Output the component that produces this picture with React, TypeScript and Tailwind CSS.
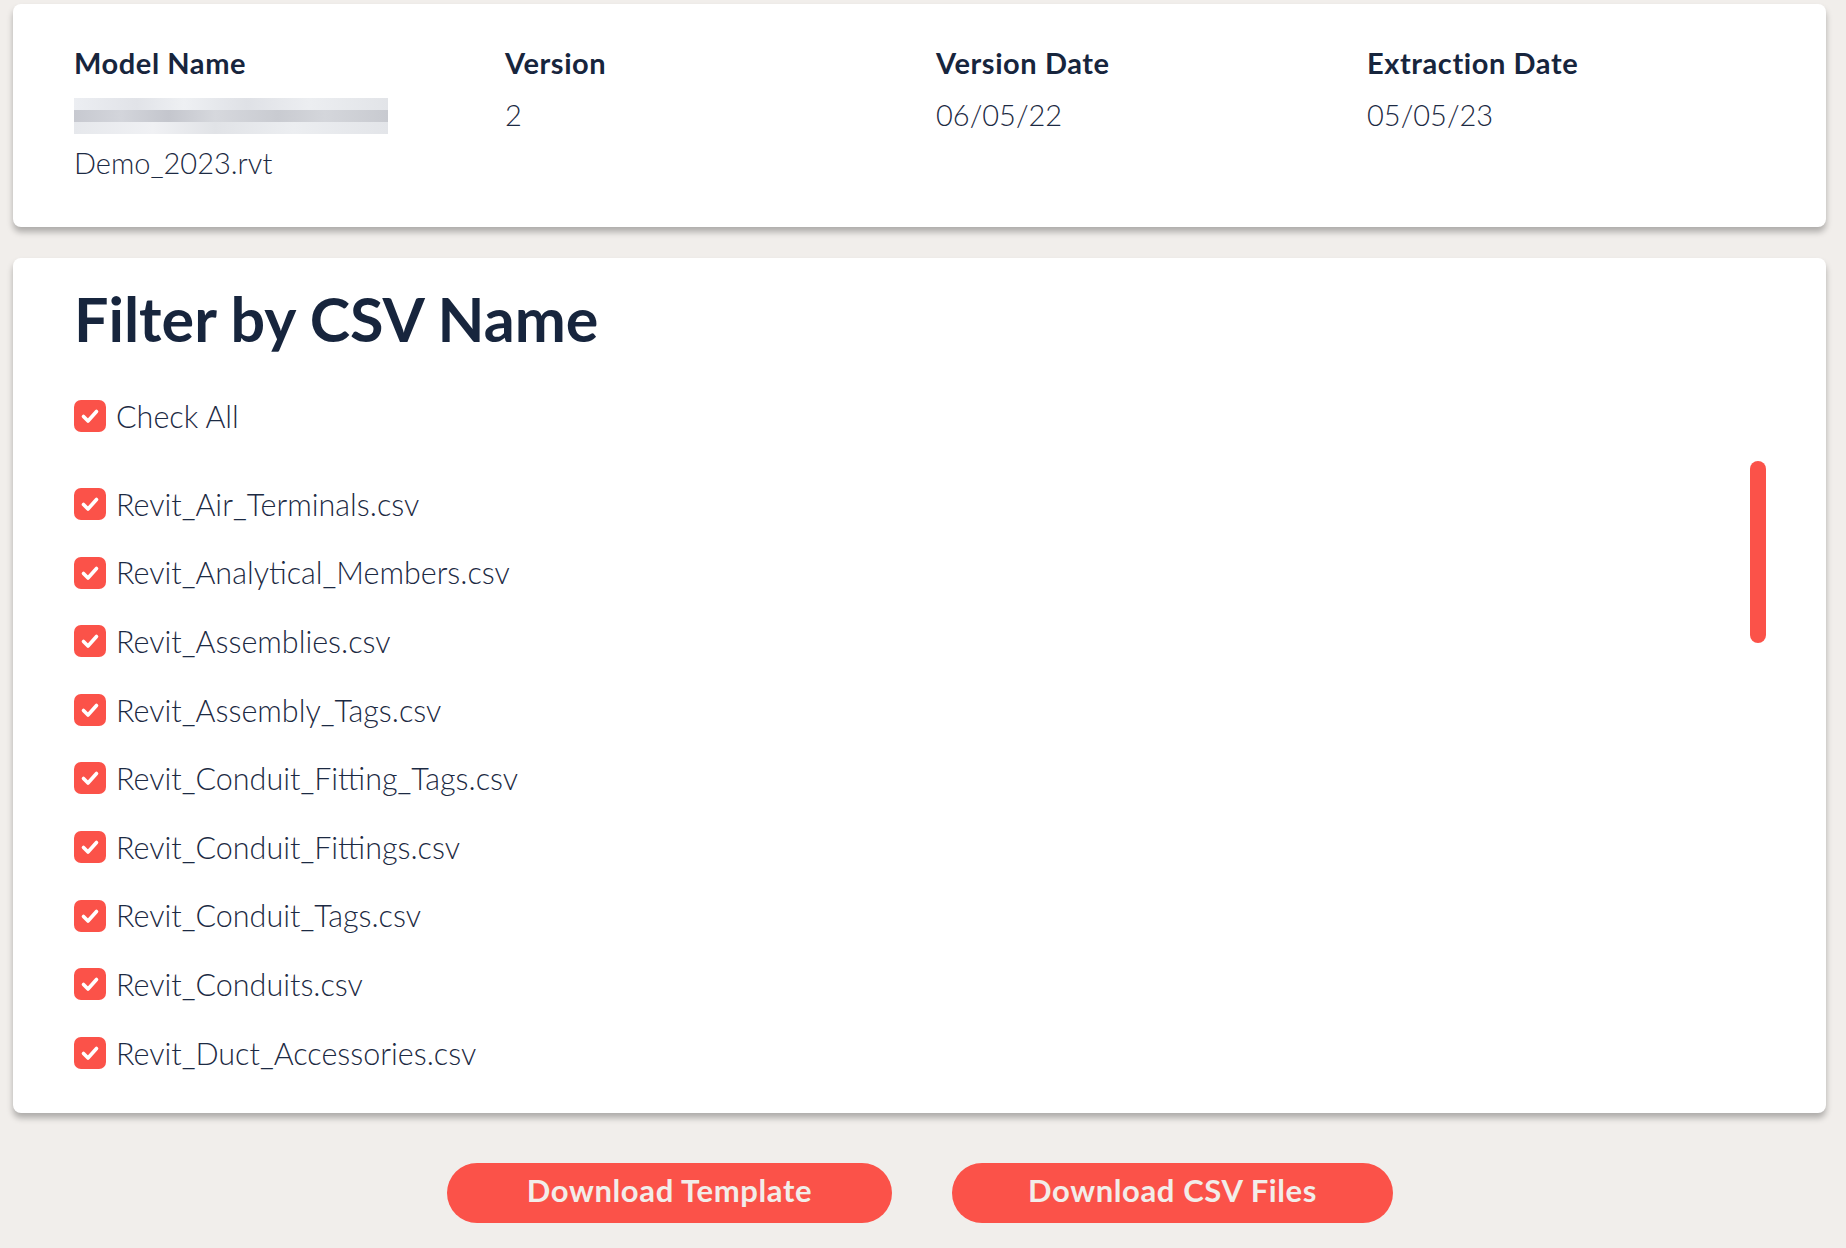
const files = [
  "Revit_Air_Terminals.csv",
  "Revit_Analytical_Members.csv",
  "Revit_Assemblies.csv",
  "Revit_Assembly_Tags.csv",
  "Revit_Conduit_Fitting_Tags.csv",
  "Revit_Conduit_Fittings.csv",
  "Revit_Conduit_Tags.csv",
  "Revit_Conduits.csv",
  "Revit_Duct_Accessories.csv",
];

function Box() {
  return (
    <span className="flex h-[32px] w-[32px] shrink-0 items-center justify-center rounded-[7px] bg-[#fb5249]">
      <svg width="32" height="32" viewBox="0 0 32 32" fill="none">
        <polyline
          points="9.5,16.5 14,21 22.5,11.5"
          stroke="white"
          strokeWidth="3.6"
          strokeLinecap="round"
          strokeLinejoin="round"
        />
      </svg>
    </span>
  );
}

function Row({ label }: { label: string }) {
  return (
    <label className="flex h-[32px] items-center gap-[10px]">
      <Box />
      <span className="text-[30.5px] font-light leading-none text-[#1c2a43]">{label}</span>
    </label>
  );
}

const meta = [
  { head: "Model Name", value: null },
  { head: "Version", value: "2" },
  { head: "Version Date", value: "06/05/22" },
  { head: "Extraction Date", value: "05/05/23" },
];

export default function App() {
  return (
    <div
      className="min-h-[1248px] w-full bg-[#f1eeeb] pt-[4px]"
      style={{ fontFamily: "Lato, 'Noto Sans', sans-serif" }}
    >
      {/* Model info */}
      <div className="ml-[13px] h-[223px] w-[1813px] rounded-[8px] bg-white pl-[61px] pt-[43px] shadow-[0_5px_6px_rgba(0,0,0,0.28)]">
        <div className="grid grid-cols-[repeat(4,431px)]">
          {meta.map((m) => (
            <div key={m.head}>
              <div className="text-[29px] font-bold leading-[32px] tracking-[0.02em] text-[#17253d]">
                {m.head}
              </div>
              {m.value ? (
                <div className="mt-[20px] text-[29px] font-light leading-[32px] text-[#1c2a43]">
                  {m.value}
                </div>
              ) : (
                <div>
                  <div className="mt-[19px] flex h-[36px] w-[314px] flex-col">
                    <div className="h-[12px] bg-[linear-gradient(90deg,#eceef2,#e1e3e8_20%,#eef0f3_35%,#dfe1e6_55%,#eceef1_75%,#e2e4e8)]" />
                    <div className="h-[12px] bg-[linear-gradient(90deg,#c7c9d0,#d3d5db_15%,#c4c6cd_30%,#d6d8dd_45%,#c9cbd1_65%,#d4d6db_80%,#c8cad0)]" />
                    <div className="h-[12px] bg-[linear-gradient(90deg,#e6e8ec,#f0f1f4_25%,#e1e3e7_45%,#eceef1_70%,#e3e5e9)]" />
                  </div>
                  <div className="mt-[13px] text-[29px] font-light leading-[32px] text-[#1c2a43]">
                    Demo_2023.rvt
                  </div>
                </div>
              )}
            </div>
          ))}
        </div>
      </div>

      {/* Filter */}
      <div className="ml-[13px] mt-[31px] h-[855px] w-[1813px] rounded-[8px] bg-white pl-[61px] pt-[26px] shadow-[0_5px_6px_rgba(0,0,0,0.28)]">
        <h1 className="text-[61px] font-bold leading-[70px] text-[#17253d]">Filter by CSV Name</h1>
        <div className="mt-[46px]">
          <Row label="Check All" />
        </div>
        <div className="relative mt-[29px] h-[630px] overflow-hidden pr-[60px]">
          <div className="flex flex-col gap-[36.6px] pt-[27px]">
            {files.map((f) => (
              <Row key={f} label={f} />
            ))}
          </div>
          <div className="absolute right-[60px] top-0 h-[182px] w-[16px] rounded-full bg-[#fb5249]" />
        </div>
      </div>

      {/* Actions */}
      <div className="mt-[50px] flex justify-center gap-[60px] pr-[6px]">
        <button className="h-[60px] w-[445px] rounded-full bg-[#fb5249] pb-[6px] text-[31px] font-bold leading-none tracking-[0.02em] text-[#f2ede9]">
          Download Template
        </button>
        <button className="h-[60px] w-[441px] rounded-full bg-[#fb5249] pb-[6px] text-[31px] font-bold leading-none tracking-[0.02em] text-[#f2ede9]">
          Download CSV Files
        </button>
      </div>
    </div>
  );
}
